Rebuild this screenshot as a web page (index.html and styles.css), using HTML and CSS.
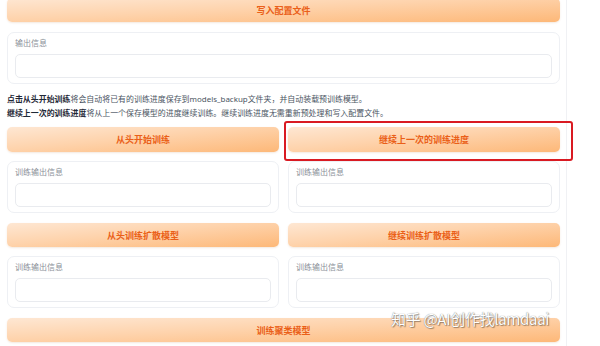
FILE: index.html
```html
<!DOCTYPE html>
<html lang="zh-CN">
<head>
<meta charset="utf-8">
<title>训练</title>
<link rel="stylesheet" href="styles.css">
</head>
<body>
<div class="page">
  <button class="btn btn-top">写入配置文件</button>
  <div class="box"><span class="label">输出信息</span><div class="input"></div></div>
  <div class="note">
    <p><b>点击从头开始训练</b>将会自动将已有的训练进度保存到models_backup文件夹，并自动装载预训练模型。</p>
    <p><b>继续上一次的训练进度</b>将从上一个保存模型的进度继续训练。继续训练进度无需重新预处理和写入配置文件。</p>
  </div>
  <div class="row row-first">
    <div class="col">
      <button class="btn">从头开始训练</button>
      <div class="box"><span class="label">训练输出信息</span><div class="input"></div></div>
    </div>
    <div class="col">
      <div class="hl">
        <button class="btn">继续上一次的训练进度</button>
        <span class="mark"></span>
      </div>
      <div class="box"><span class="label">训练输出信息</span><div class="input"></div></div>
    </div>
  </div>
  <div class="row">
    <div class="col">
      <button class="btn">从头训练扩散模型</button>
      <div class="box"><span class="label">训练输出信息</span><div class="input"></div></div>
    </div>
    <div class="col">
      <button class="btn">继续训练扩散模型</button>
      <div class="box"><span class="label">训练输出信息</span><div class="input"></div></div>
    </div>
  </div>
  <button class="btn">训练聚类模型</button>
  <div class="wm">知乎 @AI创作找lamdaai</div>
</div>
</body>
</html>
```
FILE: styles.css
```css
html, body {
  margin: 0;
  padding: 0;
  background: #ffffff;
  overflow: hidden;
}
body {
  font-family: "Noto Sans", "Noto Sans CJK SC", sans-serif;
  color: #374151;
}
.page {
  position: relative;
  width: 553px;
  height: 346px;
  padding: 0 6px 0 7px;
  border-right: 1px solid #f0f1f4;
  display: flex;
  flex-direction: column;
  gap: 10px;
}
.btn {
  display: block;
  width: 100%;
  height: 24px;
  flex: none;
  border: none;
  border-radius: 5px;
  background: linear-gradient(to bottom right, #fee7d3 0%, #fed3ac 45%, #fdb878 100%);
  box-shadow: 0 1px 2px rgba(180, 110, 40, 0.15);
  color: #ea5f18;
  font-family: "Noto Sans CJK SC", sans-serif;
  font-size: 9px;
  font-weight: 700;
  padding: 0;
  cursor: pointer;
}
.btn-top {
  margin-top: -2px;
}
.row-first .btn {
  height: 25px;
}
.box {
  box-sizing: border-box;
  height: 52px;
  flex: none;
  border: 1px solid #eef0f4;
  border-radius: 7px;
  padding: 4px 7px 0;
  background: #fff;
  display: flex;
  flex-direction: column;
  gap: 5px;
}
.label {
  display: block;
  font-family: "Noto Sans CJK SC", sans-serif;
  font-size: 8px;
  line-height: 12px;
  color: #8a8f98;
}
.input {
  height: 24px;
  box-sizing: border-box;
  border: 1px solid #e9ebef;
  border-radius: 5px;
  background: #fff;
}
.note {
  margin: -2px 0 -3px;
  font-family: "Noto Sans", "Noto Sans CJK SC", sans-serif;
  font-size: 7.95px;
  line-height: 14px;
  color: #4b5563;
}
.note p {
  margin: 0;
  white-space: nowrap;
}
.note b {
  color: #1f2937;
  font-weight: 700;
}
.row {
  display: flex;
  gap: 9px;
  flex: none;
}
.col {
  flex: 1;
  display: flex;
  flex-direction: column;
  gap: 9px;
}
.hl {
  position: relative;
}
.mark {
  position: absolute;
  left: -4px;
  right: -13px;
  top: -6px;
  bottom: -9px;
  border: 2px solid #d91a22;
  border-radius: 3px;
  pointer-events: none;
}
.wm {
  position: absolute;
  left: 391px;
  top: 309px;
  font-family: "Noto Sans CJK SC", sans-serif;
  font-size: 15px;
  line-height: 20px;
  color: #ffffff;
  white-space: nowrap;
  text-shadow: 0 0 1px rgba(0,0,0,0.55), 1px 1px 1px rgba(0,0,0,0.35);
  letter-spacing: -0.3px;
}
```
